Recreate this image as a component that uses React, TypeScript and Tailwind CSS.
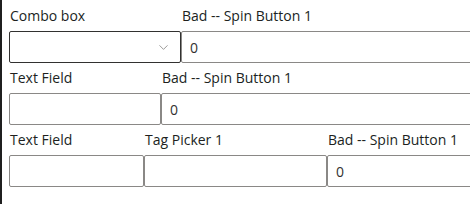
import { ChevronDown } from 'lucide-react';

const font = { fontFamily: '"Segoe UI", "Open Sans", "Noto Sans", sans-serif' };

function Label({ children }: { children: string }) {
  return (
    <div className="h-[30px] py-[5px] text-[14px] leading-[20px] font-medium text-[#201f1e] whitespace-nowrap pl-[1px]">
      {children}
    </div>
  );
}

function Field({ label, width, value, dark, chevron }: { label: string; width: string; value?: string; dark?: boolean; chevron?: boolean }) {
  return (
    <div className={`flex flex-col shrink-0 ${width}`}>
      <Label>{label}</Label>
      <div
        className={`h-[32px] flex items-center rounded-[2px] border bg-white px-[8px] text-[14px] text-[#323130] ${
          dark ? 'border-[#323130]' : 'border-[#8a8886]'
        }`}
      >
        <span className="flex-1">{value}</span>
        {chevron && <ChevronDown size={15} strokeWidth={1} className="text-[#605e5c] mr-[1px]" />}
      </div>
    </div>
  );
}

export default function App() {
  return (
    <div className="w-full h-[204px] overflow-hidden bg-white" style={font}>
      <div className="h-full border-l-2 border-[#1f1f1f] pl-[7px] pt-[1px] flex flex-col overflow-hidden">
        <div className="flex">
          <Field label="Combo box" width="w-[172px]" dark chevron />
          <Field label="Bad -- Spin Button 1" width="w-[400px]" value="0" />
        </div>
        <div className="flex">
          <Field label="Text Field" width="w-[152px]" />
          <Field label="Bad -- Spin Button 1" width="w-[400px]" value="0" />
        </div>
        <div className="flex">
          <Field label="Text Field" width="w-[135px]" />
          <Field label="Tag Picker 1" width="w-[183px]" />
          <Field label="Bad -- Spin Button 1" width="w-[400px]" value="0" />
        </div>
      </div>
    </div>
  );
}
